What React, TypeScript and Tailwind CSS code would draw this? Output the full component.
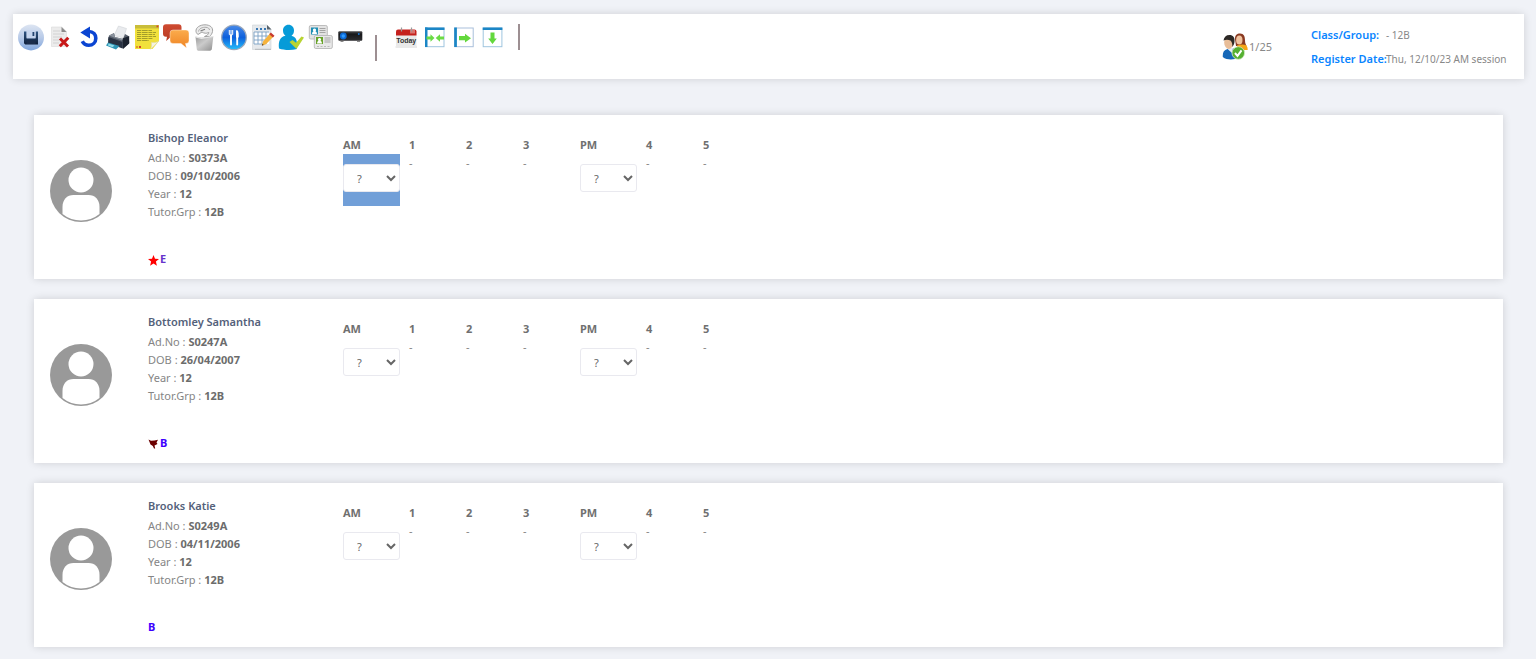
import React, { useState } from "react";

interface IconProps {
  children: React.ReactNode;
}
function Icon({ children }: IconProps) {
  return (
    <svg
      viewBox="0 0 26 26"
      className="block size-[26px] overflow-visible"
      aria-hidden="true"
    >
      {children}
    </svg>
  );
}

const SaveIcon = () => (
  <Icon>
    <defs>
      <linearGradient id="saveBg" x1="0" y1="0" x2="0" y2="1">
        <stop offset="0" stopColor="#dde5f2" />
        <stop offset="0.5" stopColor="#b9cbe8" />
        <stop offset="1" stopColor="#7fa5dc" />
      </linearGradient>
      <linearGradient id="saveDisk" x1="0" y1="0" x2="0" y2="1">
        <stop offset="0" stopColor="#2f5583" />
        <stop offset="1" stopColor="#0d1d38" />
      </linearGradient>
    </defs>
    <circle cx="13" cy="13.4" r="13" fill="url(#saveBg)" />
    <path d="M6 7.500h2.600v7h9V7.500H20v13H7.200L6 19.300z" fill="url(#saveDisk)" />
    <path d="M8.600 6.500h9v7.300h-9z" fill="#c6d5ee" />
    <path d="M14.500 8h1.800v4h-1.800z" fill="#23436f" />
    <path d="M8.500 16.500h9V20h-9z" fill="#1a2c4b" />
  </Icon>
);

const DeleteDocIcon = () => (
  <Icon>
    <path d="M4.500 3H15l4.500 4.500V22.500h-15z" fill="#ececec" stroke="#dadada" strokeWidth="0.6" />
    <path d="M14.500 3l5 5h-5z" fill="#8b8b8b" />
    <path d="M6 7h7M6 10h11M6 13h9M6 16h6M6 19h6" stroke="#d2d2d2" />
    <path d="M13 14.500l8 8M21.300 13.800l-8.500 8.500" stroke="#c81717" strokeWidth="3" />
  </Icon>
);

const UndoIcon = () => (
  <Icon>
    <path
      d="M12.500 7.500c5 0 7.300 3.200 7.300 6.800 0 4-3 7-7 7-3 0-5.300-1.500-6.500-4"
      fill="none"
      stroke="#0b45d2"
      strokeWidth="3.600"
    />
    <path d="M4.300 8.600L14 2.500v12z" fill="#0b45d2" />
  </Icon>
);

const PrinterIcon = () => (
  <Icon>
    <path d="M9 11.500L13.500 2l8 2.500L18.500 14z" fill="#e9ebee" stroke="#c9ccd0" strokeWidth="0.500" />
    <path d="M4 11.500l5-2.500 1 4 8 2 2-5 3.500 2 .8 7-6.300 5.500L3 16z" fill="#59616d" />
    <path d="M17.500 14.500l6.700-2.500v7.500L18 25z" fill="#1b222e" />
    <path d="M3.500 13l14 5v6.500L3 19z" fill="#293242" />
    <path d="M4 11.500l5-2 1 3.500 8 2-1 1.500z" fill="#8a929d" />
    <path d="M3 18.500l11.500 3.500-3.500 3.500-10-4z" fill="#2f95b5" />
    <path d="M3.500 19.500l6 2-2 1.800-4.500-1.800z" fill="#91dbe8" />
  </Icon>
);

const NoteIcon = () => (
  <Icon>
    <path d="M1 1.500h24V17l-6.500 8H1z" fill="#f1e13c" />
    <path d="M1 1h24v3.500H1z" fill="#c9bd3a" />
    <path d="M22.500 1.500h1.800v1.800h-1.800z" fill="#d6452a" />
    <path d="M3 6.500h15M3 8.500h19M3 10.500h18M3 12.500h19M3 14.500h16M3 16.500h12" stroke="#a39c2a" strokeDasharray="4 0.700 6 0.700" />
    <path d="M25 17l-8.500 8.300c1.300-2.500 1.200-4.500.8-7 2.500.6 5 .3 7.700-1.300z" fill="#f4f3e2" stroke="#d8d5a6" strokeWidth="0.400" />
    <path d="M2 22h2v2H2z" fill="#e5952c" />
    <path d="M5 22h2v2H5z" fill="#d6452a" />
  </Icon>
);

const ChatIcon = () => (
  <Icon>
    <defs>
      <linearGradient id="chatRed" x1="0" y1="0" x2="0" y2="1">
        <stop offset="0" stopColor="#cf4b31" />
        <stop offset="1" stopColor="#b83a22" />
      </linearGradient>
      <linearGradient id="chatOrange" x1="0" y1="0" x2="0" y2="1">
        <stop offset="0" stopColor="#fbac4c" />
        <stop offset="1" stopColor="#ef8424" />
      </linearGradient>
    </defs>
    <path
      d="M3 .3h12.500a3 3 0 013 3v6.500a3 3 0 01-3 3H8l-4.800 4.200.8-4.200H3a3 3 0 01-3-3V3.300a3 3 0 013-3z"
      fill="url(#chatRed)"
    />
    <path
      d="M10 6h13a3 3 0 013 3v7.500a3 3 0 01-3 3h-.500l1 4.500-5.500-4.500H10a3 3 0 01-3-3V9a3 3 0 013-3z"
      fill="url(#chatOrange)"
      stroke="#fff"
      strokeWidth="0.400"
    />
  </Icon>
);

const TrashIcon = () => (
  <Icon>
    <defs>
      <linearGradient id="trashBody" x1="0" y1="0" x2="1" y2="1">
        <stop offset="0" stopColor="#9c9c9c" />
        <stop offset="0.450" stopColor="#cbcbcb" />
        <stop offset="1" stopColor="#8f8f8f" />
      </linearGradient>
    </defs>
    <path
      d="M4 7.500C3.500 3.500 8 .8 13 .8c5 0 8.300 2.700 7.500 6.700-.4 2.200-1.500 3.800-3 5h-5c2.500-1 4.300-2.300 4.300-4-2.500 1.300-5 .8-6.800-.5L6 10.500c-1.200-.8-1.800-1.800-2-3z"
      fill="#ececec"
      stroke="#9a9a9a"
      strokeWidth="0.900"
    />
    <path d="M6.500 7.500c.5-3 4-4.500 7.500-4.200 2 .2 3.500 1.200 3.500 2.700" fill="none" stroke="#a9a9a9" />
    <path d="M8.500 7l4.500-1.800" stroke="#7d7d7d" strokeWidth="1.200" />
    <path d="M3.500 12.800l6 1 11.800-1.300-1.500 13-1.500 1.200H5.800l-1-1.200z" fill="url(#trashBody)" />
    <path d="M3.500 12.800l6 1.500 11.800-1.800" fill="none" stroke="#e6e6e6" strokeWidth="1.200" />
  </Icon>
);

const MealIcon = () => (
  <Icon>
    <defs>
      <linearGradient id="mealBg" x1="0" y1="0" x2="0" y2="1">
        <stop offset="0" stopColor="#4a8be8" />
        <stop offset="0.500" stopColor="#0d5fdc" />
        <stop offset="1" stopColor="#25c0fb" />
      </linearGradient>
    </defs>
    <circle cx="13" cy="13.400" r="12.300" fill="url(#mealBg)" stroke="#9aa7ba" strokeWidth="1.300" />
    <path
      d="M8.300 6v4.500M10 6v4.500M11.700 6v4.500M8.300 10.500q1.700 2 3.400 0"
      fill="none"
      stroke="#fff"
      strokeWidth="1"
    />
    <path d="M10 11v9.500" stroke="#fff" strokeWidth="1.900" strokeLinecap="round" />
    <path d="M15 6.500c2-1 3 1.500 2.700 7h-2.700z" fill="#fff" />
    <path d="M16.200 12v8.500" stroke="#fff" strokeWidth="1.900" strokeLinecap="round" />
  </Icon>
);

const PlannerIcon = () => (
  <Icon>
    <path d="M2.500 1H17l4 4v20.500H2.500z" fill="#e6e9ec" stroke="#cfd3d7" strokeWidth="0.600" />
    <path d="M17 1l4.500 4.500H17z" fill="#59636c" />
    <path d="M6 5h2M10 5h2M14 5h2" stroke="#3777b4" strokeWidth="2" />
    <path d="M4 8h15v12H4z" fill="#fff" />
    <path d="M4 8h15M4 12h15M4 16h15M4 20h11M4 8v12M8 8v12M12 8v12M16 8v12" stroke="#7ba0c4" strokeWidth="0.900" />
    <path d="M5 25.300h16" stroke="#b5b8bb" strokeWidth="1" />
    <path d="M20 9.500l3.500 3-7.500 7.800-4 1.200 1-4z" fill="#f6b33c" />
    <path d="M20.800 8.500l3.700 3.200-1.600 1.800-3.600-3.200z" fill="#c73a2f" />
    <path d="M12.400 19.700l-.6 2 2-.6z" fill="#5b4021" />
  </Icon>
);

const UserCheckIcon = () => (
  <Icon>
    <path
      d="M9.500.8c3.300 0 5.500 2.500 5.500 5.700 0 2.300-1 4.300-2.500 5.300 3.500.8 5.500 3.500 5.500 8V25c-6 1.600-13 1.200-18-.5-.8-7 .8-11.500 6.500-12.700C5 10.800 4 8.800 4 6.500 4 3.300 6.200.8 9.500.8z"
      fill="#069bd8"
    />
    <path d="M10.500 18l3-2 3.500 2.800 5.500-6.300 2.500 1-7.500 11.500z" fill="#b8d432" />
  </Icon>
);

const CardsIcon = () => (
  <Icon>
    <rect x="1.300" y="1.500" width="18" height="13.500" rx="1.500" fill="#e3e3e3" stroke="#bdbdbd" />
    <path d="M3 3.500h7v7H3z" fill="#1f8fb5" />
    <path d="M6.500 4.500a1.500 1.500 0 011 2.700q1.500.6 1.500 2.800H4q0-2.200 1.500-2.800a1.500 1.500 0 011-2.700z" fill="#fff" />
    <path d="M11.500 4.500h6M11.500 6.500h6M11.500 8.500h6" stroke="#a5a5a5" />
    <rect x="6.300" y="11.500" width="18" height="13" rx="1.500" fill="#e8e8e8" stroke="#bdbdbd" />
    <path d="M8 13h7v7H8z" fill="#69a32a" />
    <path d="M11.500 14a1.500 1.500 0 011 2.700q1.500.6 1.500 2.800H9q0-2.200 1.500-2.800a1.500 1.500 0 011-2.700z" fill="#fff" />
    <path d="M16.500 14h6M16.500 16h6M16.500 18h6" stroke="#a5a5a5" />
    <path d="M9 22.500h14" stroke="#bbb" strokeDasharray="2 1.500" />
  </Icon>
);

const ProjectorIcon = () => (
  <Icon>
    <defs>
      <linearGradient id="projBody" x1="0" y1="0" x2="0" y2="1">
        <stop offset="0" stopColor="#4b4d50" />
        <stop offset="0.300" stopColor="#17181a" />
        <stop offset="1" stopColor="#2d2e31" />
      </linearGradient>
    </defs>
    <rect x="1.300" y="7.300" width="24" height="9.400" rx="1" fill="url(#projBody)" />
    <path d="M3.500 16.700h3v1.100h-3zM20 16.700h3v1.100h-3z" fill="#666" />
    <circle cx="6.300" cy="12" r="3.400" fill="#0c6ad6" />
    <circle cx="6.300" cy="12" r="1.700" fill="#2f9bff" />
    <circle cx="21.800" cy="10" r="0.900" fill="#1b7ce0" />
  </Icon>
);

const TodayIcon = () => (
  <Icon>
    <path d="M2.500 22.500h21.500v1H2.500z" fill="#d5d5d5" />
    <rect x="3" y="9" width="20.500" height="13.700" rx="1.500" fill="#e9e9e9" />
    <path d="M5 5.500h16.500q2 0 2 2V11.500H3V7.500q0-2 2-2z" fill="#c5201d" />
    <path d="M17 6h5v3.500h-5z" fill="#d9746f" />
    <path d="M8.500 3.500v4M18.500 3.500v4" stroke="#9b9b9b" strokeWidth="1.200" />
    <text
      x="13.200"
      y="19"
      textAnchor="middle"
      fontSize="7"
      fontWeight="700"
      fill="#333"
      fontFamily="Liberation Sans, sans-serif"
    >
      Today
    </text>
  </Icon>
);

const FillBothIcon = () => (
  <Icon>
    <rect x="3.500" y="4" width="18.500" height="18.700" fill="#fff" stroke="#9fc5df" />
    <path d="M3 3.500h19.500V6H3z" fill="#1b86c6" />
    <path d="M3 3.500h2.500V23H3z" fill="#1b86c6" />
    <path d="M4.500 12.500h4v-2.200l4 3.700-4 3.700v-2.200h-4z" fill="#6bdb45" />
    <path d="M22 12.500h-4v-2.200L13.700 14l4.300 3.700v-2.200h4z" fill="#6bdb45" />
  </Icon>
);

const FillRightIcon = () => (
  <Icon>
    <rect x="3.700" y="4" width="18.500" height="18.700" fill="#fff" stroke="#a9bfdb" />
    <path d="M3.200 3.500h2.700V23H3.200z" fill="#1b86c6" />
    <path d="M8 12h6V9.800l6 4.400-6 4.300v-2.200H8z" fill="#63d83c" />
  </Icon>
);

const FillDownIcon = () => (
  <Icon>
    <rect x="3.200" y="4" width="18.700" height="18.700" fill="#fff" stroke="#9fc5df" />
    <path d="M2.700 3.500h19.700V6H2.700z" fill="#1b86c6" />
    <path d="M10.500 8.500h4v6h2.300l-4.300 5.500-4.300-5.500h2.300z" fill="#63d83c" />
  </Icon>
);

const PeopleIcon = () => (
  <svg viewBox="0 0 26 27" className="block h-[27px] w-[26px]" aria-hidden="true">
    <path d="M13 6C13 2 15 .5 18 .5c4 0 5 3 5 7 0 3 1 4 1.500 5.500H14z" fill="#8a3a22" />
    <ellipse cx="17.300" cy="7" rx="3.200" ry="4.500" fill="#f1c4a0" />
    <path d="M15 12.500q6-2 9.500 0 1.300 1.500 1.200 4.500H15z" fill="#f5a516" />
    <path d="M.8 24c-.3-4.500 1-7 4.700-8l5.500-.5c3.500 1 5 3.500 5 9-3 2.500-11 3-15.200-.500z" fill="#1668b8" />
    <path d="M5 15.500l6-.5-1 5z" fill="#e5eef7" />
    <ellipse cx="6.800" cy="9.500" rx="4.600" ry="6.500" fill="#e8bd98" />
    <path d="M1.500 7.500C2 4 4 2 7.500 2c3.500 0 5.500 2.500 5 6.500 0 2-1 4-2.200 5.500.2-3-.3-5-1.800-6.500-2-.8-4.500-1-7 0z" fill="#2d2926" />
    <circle cx="16.300" cy="20" r="6.300" fill="#55b031" stroke="#d3ebc6" strokeWidth="0.800" />
    <path d="M13 20l2.500 2.800 4-5.500" fill="none" stroke="#fff" strokeWidth="2" />
  </svg>
);

const Avatar = () => (
  <svg viewBox="0 0 62 62" className="block size-[62px]" role="img" aria-label="Student">
    <circle cx="31" cy="31" r="31" fill="#999" />
    <circle cx="31" cy="20" r="12.500" fill="#fff" />
    <path d="M12.500 54V47c0-7.500 4.500-12 11-12h15c6.500 0 11 4.500 11 12v7a29.500 29.500 0 01-37 0z" fill="#fff" />
  </svg>
);

const StarIcon = () => (
  <svg viewBox="0 0 11 11" className="mt-[3px] block size-[11px]" aria-hidden="true">
    <path d="M5.500 0l1.500 3.800 4 .2-3.100 2.600 1 4.100-3.400-2.300-3.400 2.300 1-4.100L0 4l4-.2z" fill="#f00" />
  </svg>
);

const FlagIcon = () => (
  <svg viewBox="0 0 11 11" className="mt-[3px] block size-[11px]" aria-hidden="true">
    <path d="M.5.500L3 1.800l3.500-.3L10 .8 8.500 3.500l1 1.500-3 1.500.7 3H6L4.800 7 2.500 5.500z" fill="#6b0000" />
  </svg>
);

const registerTools = [
  { name: "Save", icon: SaveIcon },
  { name: "Clear register", icon: DeleteDocIcon },
  { name: "Undo", icon: UndoIcon },
  { name: "Print", icon: PrinterIcon },
  { name: "Notes", icon: NoteIcon },
  { name: "Messages", icon: ChatIcon },
  { name: "Delete", icon: TrashIcon },
  { name: "Meals", icon: MealIcon },
  { name: "Planner", icon: PlannerIcon },
  { name: "Mark present", icon: UserCheckIcon },
  { name: "Student cards", icon: CardsIcon },
  { name: "Projector", icon: ProjectorIcon },
];

const fillTools = [
  { name: "Today", icon: TodayIcon },
  { name: "Fill all", icon: FillBothIcon },
  { name: "Fill right", icon: FillRightIcon },
  { name: "Fill down", icon: FillDownIcon },
];

interface Student {
  name: string;
  adNo: string;
  dob: string;
  year: string;
  tutorGrp: string;
  code: string;
  codeColor: string;
  marker?: "star" | "flag";
}

const students: Student[] = [
  {
    name: "Bishop Eleanor",
    adNo: "S0373A",
    dob: "09/10/2006",
    year: "12",
    tutorGrp: "12B",
    code: "E",
    codeColor: "text-[#6633cc]",
    marker: "star",
  },
  {
    name: "Bottomley Samantha",
    adNo: "S0247A",
    dob: "26/04/2007",
    year: "12",
    tutorGrp: "12B",
    code: "B",
    codeColor: "text-[#3d00ff]",
    marker: "flag",
  },
  {
    name: "Brooks Katie",
    adNo: "S0249A",
    dob: "04/11/2006",
    year: "12",
    tutorGrp: "12B",
    code: "B",
    codeColor: "text-[#3d00ff]",
  },
];

const sessions = ["AM", "1", "2", "3", "PM", "4", "5"];
const isMarkable = (session: string) => session === "AM" || session === "PM";

interface ToolProps {
  name: string;
  icon: () => React.JSX.Element;
}
function Tool({ name, icon: ToolIcon }: ToolProps) {
  return (
    <button type="button" aria-label={name} className="cursor-pointer">
      <ToolIcon />
    </button>
  );
}

function Header() {
  return (
    <header className="mt-[14px] mr-3 ml-[13px] flex h-[65px] justify-between bg-white shadow-[0_0_8px_rgba(0,0,0,0.14)]">
      <div className="flex items-start gap-3 pt-2.5 pl-[5px]">
        <div className="flex gap-[3px]">
          {registerTools.map((tool) => (
            <Tool key={tool.name} {...tool} />
          ))}
        </div>
        <div className="mt-[11px] h-[26px] w-0.5 bg-[#9d8f92]" />
        <div className="flex gap-[3px] pl-1">
          {fillTools.map((tool) => (
            <Tool key={tool.name} {...tool} />
          ))}
        </div>
        <div className="h-[26px] w-0.5 bg-[#9d8f92]" />
      </div>
      <div className="flex items-center text-[#888]">
        <div className="flex w-[89px] items-center gap-px">
          <PeopleIcon />
          <span>1/25</span>
        </div>
        <dl className="grid w-[213px] grid-cols-[75px_1fr] leading-6 whitespace-nowrap">
          <dt className="font-semibold text-[#0a85ff]">Class/Group:</dt>
          <dd className="text-[10px]">- 12B</dd>
          <dt className="font-semibold text-[#0a85ff]">Register Date:</dt>
          <dd className="text-[10px]">Thu, 12/10/23 AM session</dd>
        </dl>
      </div>
    </header>
  );
}

interface CardProps {
  student: Student;
  active: boolean;
  onFocus: () => void;
}
function StudentCard({ student, active, onFocus }: CardProps) {
  return (
    <article className="flex h-[164px] bg-white pl-4 text-[#858585] shadow-[0_0_8px_rgba(0,0,0,0.14)]">
      <div className="w-[98px] shrink-0 pt-[45px]">
        <Avatar />
      </div>
      <div className="w-[195px] shrink-0 pt-[13px] leading-[18px]">
        <h2 className="mb-px leading-5 font-semibold text-[#54617a]">{student.name}</h2>
        <p>
          Ad.No : <b className="text-[#6c6c6c]">{student.adNo}</b>
        </p>
        <p>
          DOB : <b className="text-[#6c6c6c]">{student.dob}</b>
        </p>
        <p>
          Year : <b className="text-[#6c6c6c]">{student.year}</b>
        </p>
        <p>
          Tutor.Grp : <b className="text-[#6c6c6c]">{student.tutorGrp}</b>
        </p>
        <div className="mt-[29px] flex items-center gap-px">
          {student.marker === "star" && <StarIcon />}
          {student.marker === "flag" && <FlagIcon />}
          <b className={student.codeColor}>{student.code}</b>
        </div>
      </div>
      <div className="pt-[21px]">
        <table className="table-fixed text-left">
          <thead className="text-[#707070]">
            <tr>
              {sessions.map((session) => (
                <th key={session} className={isMarkable(session) ? "w-[66px]" : "w-[57px]"}>
                  {session}
                </th>
              ))}
            </tr>
          </thead>
          <tbody>
            <tr className="align-top">
              {sessions.map((session) =>
                isMarkable(session) ? (
                  <td key={session}>
                    <div
                      className={
                        active && session === "AM"
                          ? "w-[57px] bg-[#719fd8] pt-2.5 pb-[14px]"
                          : "w-[57px] pt-2.5 pb-[14px]"
                      }
                    >
                      <select
                        aria-label={`${student.name} ${session}`}
                        onFocus={onFocus}
                        className="block h-7 w-full rounded-[3px] border border-[#e9e9ef] bg-white pl-[9px] text-[#666]"
                      >
                        <option>?</option>
                        <option>/</option>
                        <option>N</option>
                      </select>
                    </div>
                  </td>
                ) : (
                  <td key={session}>-</td>
                )
              )}
            </tr>
          </tbody>
        </table>
      </div>
    </article>
  );
}

function App() {
  const [activeIndex, setActiveIndex] = useState<number>(0);

  return (
    <div className="flow-root min-h-screen bg-[#f0f2f7] font-['Noto_Sans',sans-serif] text-[11px] leading-[18px]">
      <Header />
      <main className="mt-9 mr-[33px] ml-[34px] flex flex-col gap-5 pb-3">
        {students.map((student, index) => (
          <StudentCard
            key={student.adNo}
            student={student}
            active={index === activeIndex}
            onFocus={() => setActiveIndex(index)}
          />
        ))}
      </main>
    </div>
  );
}

export default App;
